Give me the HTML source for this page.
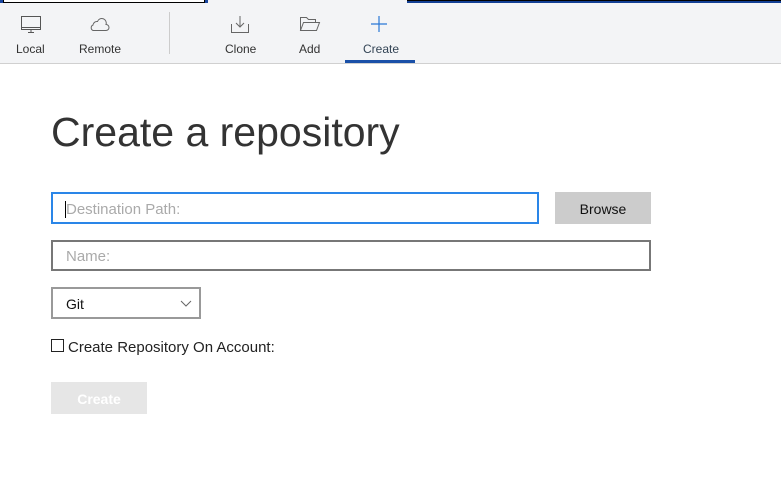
<!DOCTYPE html>
<html><head><style>
body{margin:0;width:781px;height:489px;background:#fff;font-family:"Segoe UI","Liberation Sans",sans-serif;position:relative;overflow:hidden}
.tb{position:absolute;left:0;top:0;width:781px;height:63px;background:#f3f4f6;border-bottom:1px solid #d0d0d0}
.it{position:absolute;top:42px;font-size:12px;color:#333;text-align:center}
svg{position:absolute}
.in{position:absolute;box-sizing:border-box;font-size:15px;color:#aaa;padding-left:13px}
</style></head><body>
<div class="tb">
<div style="position:absolute;left:0;top:0;width:3px;height:3px;background:#1a47a0"></div>
<div style="position:absolute;left:3px;top:0;width:202px;height:3px;background:#fff;border:1px solid #000;border-top:0;box-sizing:border-box"></div>
<div style="position:absolute;left:205px;top:0;width:3px;height:3px;background:#1a47a0"></div>
<div style="position:absolute;left:407px;top:0;width:374px;height:3px;background:#123f94;border-top:1px solid #000;box-sizing:border-box"></div>
<svg style="left:20px;top:15px" width="22" height="20" viewBox="0 0 22 20" fill="none" stroke="#555" stroke-width="1"><rect x="1.5" y="1.5" width="19" height="13"/><path d="M1.5 12.5h19M8 17.5h6M11 14.5v3"/></svg>
<svg style="left:88px;top:16px" width="22" height="16" viewBox="0 0 22 16" fill="none" stroke="#666" stroke-width="1"><path d="M5 14.5h13a3 3 0 0 0 0-6a4.5 4.5 0 0 0-8.5-3a4 4 0 0 0-4.5 3.5a3 3 0 0 0 0 5.5z"/></svg>
<div style="position:absolute;left:169px;top:12px;width:1px;height:42px;background:#ccc"></div>
<svg style="left:230px;top:14px" width="20" height="20" viewBox="0 0 20 20" fill="none" stroke="#666" stroke-width="1"><path d="M1.5 10v8.5h17V10M10 2v11M6 9l4 4 4-4"/></svg>
<svg style="left:299px;top:16px" width="22" height="16" viewBox="0 0 22 16" fill="none" stroke="#666" stroke-width="1"><path d="M1.5 14.5V1.5h6l2 2h7v3M1.5 14.5l3-8h16l-3 8z"/></svg>
<svg style="left:371px;top:16px" width="16" height="16" viewBox="0 0 16 16" stroke="#2a78d6" stroke-width="1.2"><path d="M8 0v16M0 8h16"/></svg>
<div class="it" style="left:16px">Local</div>
<div class="it" style="left:79px">Remote</div>
<div class="it" style="left:225px">Clone</div>
<div class="it" style="left:299px">Add</div>
<div class="it" style="left:363px;color:#345">Create</div>
<div style="position:absolute;left:345px;top:60px;width:70px;height:3px;background:#1a50a8"></div>
</div>
<div style="position:absolute;left:51px;top:109px;font-size:41px;color:#333;font-weight:300">Create a repository</div>
<div class="in" style="left:51px;top:192px;width:488px;height:32px;border:2px solid #2a86e8;line-height:31px"><span style="border-left:1px solid #000;margin-left:-1px"></span>Destination Path:</div>
<div style="position:absolute;left:555px;top:192px;width:96px;height:32px;background:#ccc;font-size:14px;color:#111;text-align:center;line-height:34px">Browse</div>
<div class="in" style="left:51px;top:240px;width:600px;height:31px;border:2px solid #777;line-height:30px">Name:</div>
<div class="in" style="left:51px;top:287px;width:150px;height:32px;border:2px solid #999;line-height:31px;color:#111;font-size:14px">Git
<svg style="left:127px;top:11px" width="12" height="8" viewBox="0 0 12 8" fill="none" stroke="#666"><path d="M1 1l5 5 5-5"/></svg></div>
<div style="position:absolute;left:51px;top:339px;width:13px;height:13px;border:1px solid #222;box-sizing:border-box"></div>
<div style="position:absolute;left:68px;top:339px;font-size:15px;color:#222">Create Repository On Account:</div>
<div style="position:absolute;left:51px;top:382px;width:96px;height:32px;background:#e6e6e6;color:#fff;font-weight:bold;font-size:14px;text-align:center;line-height:34px">Create</div>
</body></html>
